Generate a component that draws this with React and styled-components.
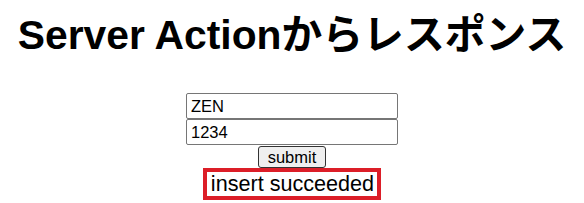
import React from "react";
import styled, { createGlobalStyle } from "styled-components";

const Global = createGlobalStyle`
  html, body { margin: 0; padding: 0; background: #fff; }
  body { font-family: "Liberation Sans", Arial, "Noto Sans CJK JP", sans-serif; color: #000; }
`;

const Page = styled.main`
  display: flex;
  flex-direction: column;
  align-items: center;
  padding-top: 12px;
`;

const Title = styled.h1`
  margin: 0 0 35px;
  font-size: 40.8px;
  line-height: 46px;
  font-weight: 700;
  white-space: nowrap;
  font-family: "Liberation Sans", Arial, "Noto Sans CJK JP", sans-serif;
`;

const Form = styled.form`
  display: flex;
  flex-direction: column;
  align-items: center;
`;

const Field = styled.input`
  box-sizing: border-box;
  width: 212px;
  height: 26px;
  margin: 0;
  padding: 1px 4px;
  border: 1px solid #767676;
  border-radius: 2px;
  font-family: "Liberation Sans", Arial, sans-serif;
  font-size: 16.5px;
  color: #000;
  background: #fff;
  outline: none;
`;

const Submit = styled.button`
  box-sizing: border-box;
  margin-top: 1px;
  width: 68px;
  height: 22px;
  padding: 0;
  border: 1px solid #333;
  border-radius: 3px;
  background: #efefef;
  font-family: "Liberation Sans", Arial, sans-serif;
  font-size: 16.5px;
  line-height: 18px;
  color: #000;
`;

const Result = styled.p`
  box-sizing: border-box;
  margin: 0;
  height: 32px;
  padding: 0 3px 0 4px;
  border: 4px solid #dc1e28;
  font-size: 21.6px;
  line-height: 24px;
  white-space: nowrap;
`;

export default function App() {
  return (
    <>
      <Global />
      <Page>
        <Title>Server Actionからレスポンス</Title>
        <Form onSubmit={(e) => e.preventDefault()}>
          <Field name="name" defaultValue="ZEN" />
          <Field name="code" defaultValue="1234" />
          <Submit type="submit">submit</Submit>
          <Result>insert succeeded</Result>
        </Form>
      </Page>
    </>
  );
}
